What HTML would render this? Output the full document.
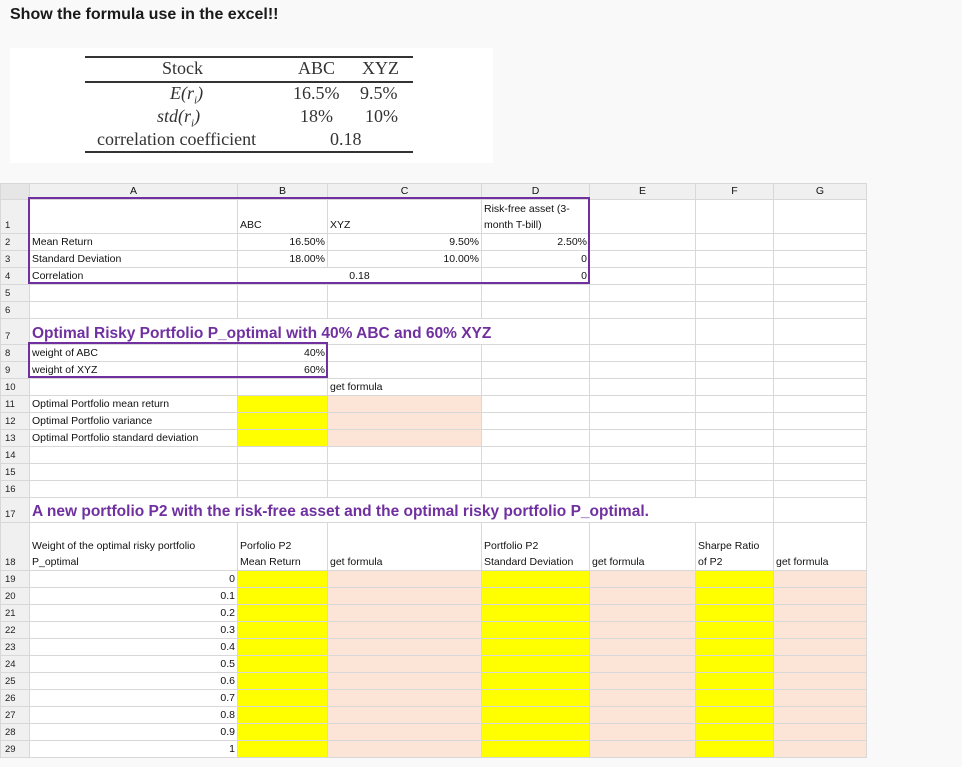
<!DOCTYPE html><html><head><style>
body{margin:0;background:#f9f9f9;width:962px;height:767px;overflow:hidden;position:relative;font-family:"Liberation Sans",sans-serif}
.t{position:absolute;left:10px;top:6px;font-size:16px;font-weight:bold;color:#1a1a1a}
.img{position:absolute;left:10px;top:48px;width:483px;height:115px;background:#fff;font-family:"Liberation Serif",serif;font-size:18px;color:#333}
.img .l{position:absolute;left:75px;width:328px;height:2px;background:#333}
.img div.x{position:absolute;white-space:nowrap}
table{position:absolute;left:0;top:183px;border-collapse:collapse;table-layout:fixed;font-size:10.5px;color:#111;background:#fff}
td{border:1px solid #d8d8d8;padding:0 2px;white-space:nowrap;overflow:visible;vertical-align:bottom;line-height:15px}
td.h{background:#f0f0f0;text-align:left;padding-left:4px;color:#222;font-size:9.5px}
tr.hd td{background:#f0f0f0;text-align:center;height:14px}
.r{text-align:right}.c{text-align:center}
.y{background:#ffff00}.p{background:#fce4d6}
.big{font-size:15.5px;font-weight:bold;color:#7030a0;line-height:20px;overflow:visible}
.box{position:absolute;border:2px solid #7030a0;box-sizing:border-box}
</style></head><body>
<div class="t">Show the formula use in the excel!!</div>
<div class="img">
<div class="l" style="top:8px"></div><div class="l" style="top:33px"></div><div class="l" style="top:103px"></div>
<div class="x" style="left:152px;top:10px">Stock</div><div class="x" style="left:288px;top:10px">ABC</div><div class="x" style="left:352px;top:10px">XYZ</div>
<div class="x" style="left:160px;top:35px;font-style:italic">E(r<sub style="font-size:11px">i</sub>)</div><div class="x" style="left:283px;top:35px">16.5%</div><div class="x" style="left:350px;top:35px">9.5%</div>
<div class="x" style="left:147px;top:58px;font-style:italic">std(r<sub style="font-size:11px">i</sub>)</div><div class="x" style="left:290px;top:58px">18%</div><div class="x" style="left:355px;top:58px">10%</div>
<div class="x" style="left:87px;top:81px">correlation coefficient</div><div class="x" style="left:320px;top:81px">0.18</div>
</div>
<table>
<colgroup><col style="width:29px"><col style="width:208px"><col style="width:90px"><col style="width:154px"><col style="width:108px"><col style="width:106px"><col style="width:78px"><col style="width:93px"></colgroup>
<tr class="hd"><td style="background:#e6e6e6"></td><td>A</td><td>B</td><td>C</td><td>D</td><td>E</td><td>F</td><td>G</td></tr>
<tr style="height:34px"><td class="h">1</td><td></td><td>ABC</td><td>XYZ</td><td style="white-space:normal;line-height:16px">Risk-free asset (3-month T-bill)</td><td></td><td></td><td></td></tr>
<tr style="height:17px"><td class="h">2</td><td>Mean Return</td><td class="r">16.50%</td><td class="r">9.50%</td><td class="r">2.50%</td><td></td><td></td><td></td></tr>
<tr style="height:17px"><td class="h">3</td><td>Standard Deviation</td><td class="r">18.00%</td><td class="r">10.00%</td><td class="r">0</td><td></td><td></td><td></td></tr>
<tr style="height:17px"><td class="h">4</td><td>Correlation</td><td colspan="2" class="c">0.18</td><td class="r">0</td><td></td><td></td><td></td></tr>
<tr style="height:17px"><td class="h">5</td><td></td><td></td><td></td><td></td><td></td><td></td><td></td></tr>
<tr style="height:17px"><td class="h">6</td><td></td><td></td><td></td><td></td><td></td><td></td><td></td></tr>
<tr style="height:26px"><td class="h">7</td><td colspan="4" class="big">Optimal Risky Portfolio P_optimal with 40% ABC and 60% XYZ</td><td></td><td></td><td></td></tr>
<tr style="height:17px"><td class="h">8</td><td>weight of ABC</td><td class="r">40%</td><td></td><td></td><td></td><td></td><td></td></tr>
<tr style="height:17px"><td class="h">9</td><td>weight of XYZ</td><td class="r">60%</td><td></td><td></td><td></td><td></td><td></td></tr>
<tr style="height:17px"><td class="h">10</td><td></td><td></td><td>get formula</td><td></td><td></td><td></td><td></td></tr>
<tr style="height:17px"><td class="h">11</td><td>Optimal Portfolio mean return</td><td class="y"></td><td class="p"></td><td></td><td></td><td></td><td></td></tr>
<tr style="height:17px"><td class="h">12</td><td>Optimal Portfolio variance</td><td class="y"></td><td class="p"></td><td></td><td></td><td></td><td></td></tr>
<tr style="height:17px"><td class="h">13</td><td>Optimal Portfolio standard deviation</td><td class="y"></td><td class="p"></td><td></td><td></td><td></td><td></td></tr>
<tr style="height:17px"><td class="h">14</td><td></td><td></td><td></td><td></td><td></td><td></td><td></td></tr>
<tr style="height:17px"><td class="h">15</td><td></td><td></td><td></td><td></td><td></td><td></td><td></td></tr>
<tr style="height:17px"><td class="h">16</td><td></td><td></td><td></td><td></td><td></td><td></td><td></td></tr>
<tr style="height:25px"><td class="h">17</td><td colspan="6" class="big">A new portfolio P2 with the risk-free asset and the optimal risky portfolio P_optimal.</td><td></td></tr>
<tr style="height:48px"><td class="h">18</td><td style="line-height:16px">Weight of the optimal risky portfolio<br>P_optimal</td><td style="line-height:16px">Porfolio P2<br>Mean Return</td><td>get formula</td><td style="line-height:16px">Portfolio P2<br>Standard Deviation</td><td>get formula</td><td style="line-height:16px">Sharpe Ratio<br>of P2</td><td>get formula</td></tr>
<tr style="height:17px"><td class="h">19</td><td class="r">0</td><td class="y"></td><td class="p"></td><td class="y"></td><td class="p"></td><td class="y"></td><td class="p"></td></tr>
<tr style="height:17px"><td class="h">20</td><td class="r">0.1</td><td class="y"></td><td class="p"></td><td class="y"></td><td class="p"></td><td class="y"></td><td class="p"></td></tr>
<tr style="height:17px"><td class="h">21</td><td class="r">0.2</td><td class="y"></td><td class="p"></td><td class="y"></td><td class="p"></td><td class="y"></td><td class="p"></td></tr>
<tr style="height:17px"><td class="h">22</td><td class="r">0.3</td><td class="y"></td><td class="p"></td><td class="y"></td><td class="p"></td><td class="y"></td><td class="p"></td></tr>
<tr style="height:17px"><td class="h">23</td><td class="r">0.4</td><td class="y"></td><td class="p"></td><td class="y"></td><td class="p"></td><td class="y"></td><td class="p"></td></tr>
<tr style="height:17px"><td class="h">24</td><td class="r">0.5</td><td class="y"></td><td class="p"></td><td class="y"></td><td class="p"></td><td class="y"></td><td class="p"></td></tr>
<tr style="height:17px"><td class="h">25</td><td class="r">0.6</td><td class="y"></td><td class="p"></td><td class="y"></td><td class="p"></td><td class="y"></td><td class="p"></td></tr>
<tr style="height:17px"><td class="h">26</td><td class="r">0.7</td><td class="y"></td><td class="p"></td><td class="y"></td><td class="p"></td><td class="y"></td><td class="p"></td></tr>
<tr style="height:17px"><td class="h">27</td><td class="r">0.8</td><td class="y"></td><td class="p"></td><td class="y"></td><td class="p"></td><td class="y"></td><td class="p"></td></tr>
<tr style="height:17px"><td class="h">28</td><td class="r">0.9</td><td class="y"></td><td class="p"></td><td class="y"></td><td class="p"></td><td class="y"></td><td class="p"></td></tr>
<tr style="height:17px"><td class="h">29</td><td class="r">1</td><td class="y"></td><td class="p"></td><td class="y"></td><td class="p"></td><td class="y"></td><td class="p"></td></tr>
</table>
<div class="box" style="left:28px;top:197px;width:562px;height:87px"></div>
<div class="box" style="left:28px;top:342px;width:300px;height:36px"></div>
</body></html>
